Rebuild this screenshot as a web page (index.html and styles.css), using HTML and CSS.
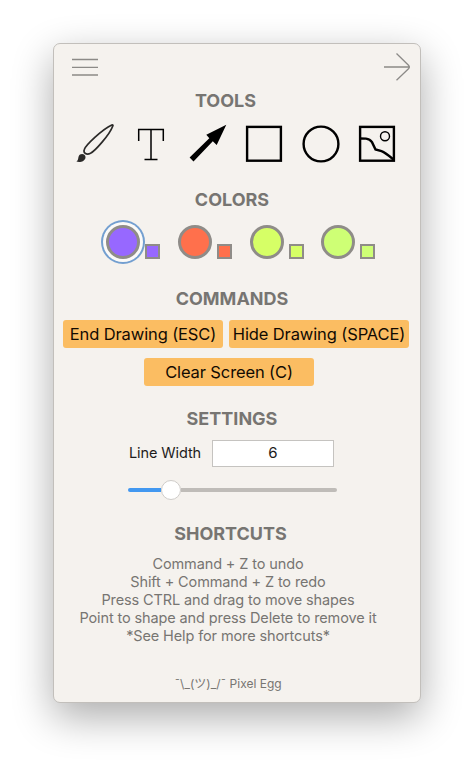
FILE: index.html
```html
<!DOCTYPE html>
<html lang="en">
<head>
  <meta charset="UTF-8" />
  <meta name="viewport" content="width=device-width, initial-scale=1.0"/>
  <title>Pixel Egg</title>
  <link rel="stylesheet" href="styles.css">
</head>
<body>
  <div class="panel">
    <div class="topbar">
      <svg class="menu-icon" width="26" height="28" viewBox="0 0 26 28">
        <path d="M0 6.5H26M0 14.3H26M0 22H26" />
      </svg>
      <svg class="next-icon" width="27" height="28" viewBox="0 0 27 28">
        <path d="M0 14H25.500M12.500 .5L24.500 12.200Q26.200 14 24.500 15.800L12.500 27.200" />
      </svg>
    </div>

    <h2 class="tools-title">TOOLS</h2>
    <div class="tools">
      <svg class="tool" viewBox="0 0 40 40">
        <path class="brush-line" d="M9.300 25.500C10.500 21.500 27 5.500 36.800 1Q38.400 .5 37.800 2C34.500 11 20 27 15.500 29.300C11.500 31.200 8 29.200 9.300 25.500Z" />
        <path class="brush-tip" d="M5 30.500C7.500 28.800 11 30.800 10.500 33.800C9.800 37.500 5 38.800 1.300 37.600C4 36.500 2.500 32.500 5 30.500Z" />
      </svg>
      <svg class="tool" viewBox="0 0 40 40">
        <path class="type-line" d="M7.700 17V5.500H32.300V17M20 5.500V35.500M13.500 35.600H26.500" />
      </svg>
      <svg class="tool" viewBox="0 0 40 40">
        <path d="M38.300 .8L28.700 21L24.800 17.200L5.500 37.500L1.600 33.600L21.300 14.200L18.300 10.800Z" />
      </svg>
      <svg class="tool" viewBox="0 0 40 40">
        <rect class="shape-line" x="3.100" y="2.900" width="33.800" height="33.800" />
      </svg>
      <svg class="tool" viewBox="0 0 40 40">
        <circle class="shape-line" cx="20" cy="20" r="17.400" />
      </svg>
      <svg class="tool" viewBox="0 0 40 40">
        <rect class="shape-line" x="3.100" y="2.900" width="33.800" height="33.800" />
        <path class="shape-line" d="M3 14.500L9 14.600Q13 15 15 18.200L18.500 25.500L24.500 27.200Q28 28.500 36.500 35.500" />
        <circle class="sun-line" cx="28" cy="12.300" r="4.500" />
      </svg>
    </div>

    <h2>COLORS</h2>
    <div class="colors">
      <div class="color purple selected"><span class="dot"></span><span class="square"></span></div>
      <div class="color red"><span class="dot"></span><span class="square"></span></div>
      <div class="color lime"><span class="dot"></span><span class="square"></span></div>
      <div class="color green"><span class="dot"></span><span class="square"></span></div>
    </div>

    <h2>COMMANDS</h2>
    <div class="commands">
      <button type="button" class="end-btn">End Drawing (ESC)</button>
      <button type="button" class="hide-btn">Hide Drawing (SPACE)</button>
      <button type="button" class="clear-btn">Clear Screen (C)</button>
    </div>

    <h2>SETTINGS</h2>
    <div class="line-width">
      <label for="lineWidth">Line Width</label>
      <input type="text" id="lineWidth" value="6" />
    </div>
    <div class="slider">
      <div class="slider-fill"></div>
      <div class="slider-thumb"></div>
      <div class="slider-rest"></div>
    </div>

    <h2 class="shortcuts-title">SHORTCUTS</h2>
    <div class="shortcuts">
      <p>Command + Z to undo</p>
      <p>Shift + Command + Z to redo</p>
      <p>Press CTRL and drag to move shapes</p>
      <p>Point to shape and press Delete to remove it</p>
      <p>*See Help for more shortcuts*</p>
    </div>

    <div class="footer">¯\_(ツ)_/¯ Pixel Egg</div>
  </div>
</body>
</html>
```
FILE: styles.css
```css
* {
  box-sizing: border-box;
}

body {
  margin: 0;
  height: 767px;
  overflow: hidden;
  padding: 43px 53px;
  background: #fff;
  font-family: Inter, "Noto Sans CJK JP", sans-serif;
  color: #777572;
}

.panel {
  width: 368px;
  height: 660px;
  background: #f5f2ee;
  border: 1px solid #c2bfbb;
  border-radius: 7px;
  box-shadow: 0 14px 40px rgba(0, 0, 0, 0.33);
}

.topbar {
  display: flex;
  justify-content: space-between;
  height: 46px;
  padding: 9px 9px 0 18px;
}

.topbar svg {
  fill: none;
  stroke: #8c8a87;
  stroke-width: 1.3;
}

h2 {
  margin: 0;
  width: 356px;
  height: 22px;
  line-height: 22px;
  text-align: center;
  font-size: 18px;
  font-weight: 700;
}

.tools-title {
  width: 343px;
}

.tools {
  display: flex;
  gap: 16.4px;
  height: 77px;
  padding: 12px 0 0 21px;
}

.tool {
  width: 40px;
  height: 40px;
  flex: none;
}

.brush-line,
.type-line,
.shape-line,
.sun-line {
  fill: none;
  stroke: #000;
}

.brush-line {
  stroke: #2b2a28;
  stroke-width: 1.7;
}

.brush-tip {
  fill: #2b2a28;
}

.type-line {
  stroke-width: 1.5;
}

.shape-line {
  stroke-width: 2.4;
}

.sun-line {
  stroke-width: 1.4;
}

.colors {
  display: flex;
  gap: 17.8px;
  height: 77px;
  padding: 14px 0 0 52px;
}

.color {
  display: flex;
  align-items: flex-end;
  gap: 5px;
  height: 34px;
}

.dot {
  width: 34px;
  height: 34px;
  border: 3px solid #8f8c88;
  border-radius: 50%;
}

.square {
  width: 15px;
  height: 15px;
  border: 2px solid #8f8c88;
}

.selected .dot {
  box-shadow: 0 0 0 3px #fbfaf8, 0 0 0 5px #739fd0;
}

.purple span {
  background: #9768ff;
}

.red span {
  background: #ff704c;
}

.lime span {
  background: #d6ff66;
}

.green span {
  background: #ceff75;
}

.commands {
  display: flex;
  flex-wrap: wrap;
  gap: 10px 6px;
  align-content: flex-start;
  height: 98px;
  padding: 10px 0 0 9px;
}

.commands button {
  height: 28px;
  padding: 0;
  border: none;
  border-radius: 3px;
  background: #fbbd62;
  color: #120b02;
  font-family: inherit;
  font-size: 16.5px;
  letter-spacing: -0.12px;
  line-height: 28px;
  white-space: nowrap;
}

.end-btn {
  width: 160px;
}

.hide-btn {
  width: 180px;
}

.clear-btn {
  width: 170px;
  margin-left: 81px;
}

.line-width {
  display: flex;
  align-items: center;
  height: 27px;
  margin-top: 10px;
  padding-left: 75px;
  color: #1d1c1b;
}

.line-width label {
  width: 83px;
  font-size: 14.5px;
  letter-spacing: -0.1px;
  line-height: 24px;
  padding-bottom: 2px;
  white-space: nowrap;
}

.line-width input {
  width: 122px;
  height: 27px;
  padding: 0 0 2px;
  border: 1px solid #c5c3c0;
  background: #fff;
  color: #1d1c1b;
  font-family: inherit;
  font-size: 15px;
  text-align: center;
}

.slider {
  display: flex;
  align-items: center;
  width: 209px;
  height: 20px;
  margin: 13px 0 23px 74px;
}

.slider-fill {
  width: 33px;
  height: 4px;
  border-radius: 2px 0 0 2px;
  background: #4298f0;
}

.slider-thumb {
  width: 20px;
  height: 20px;
  border: 1px solid #cfccc9;
  border-radius: 50%;
  background: #fff;
}

.slider-rest {
  flex: 1;
  height: 4px;
  border-radius: 0 2px 2px 0;
  background: #bfbcb8;
}

.shortcuts-title {
  width: 353px;
}

.shortcuts {
  width: 348px;
  padding-top: 10px;
  text-align: center;
}

.shortcuts p {
  margin: 0;
  font-size: 14.5px;
  letter-spacing: -0.12px;
  line-height: 18px;
  white-space: nowrap;
}

.footer {
  width: 348px;
  margin-top: 30px;
  text-align: center;
  font-size: 12px;
  line-height: 18px;
}
```
